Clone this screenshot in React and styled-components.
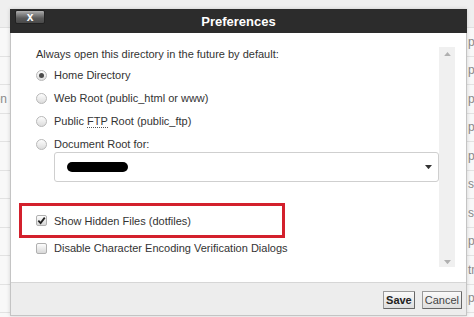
import React from "react"
import styled, { createGlobalStyle } from "styled-components"

const Global = createGlobalStyle`
html, body {
  margin: 0;
  padding: 0;
  width: 474px;
  height: 317px;
  overflow: hidden;
  font-family: "Liberation Sans", Arial, sans-serif;
}
`

const Page = styled.div`
position: relative;
width: 474px;
height: 317px;
background: #f8f8f8;
overflow: hidden;
`

const HeadRow = styled.div`
height: 28px;
background: #efefef;
border-bottom: 1px solid #e0e0e0;
box-sizing: border-box;
`

const Row = styled.div`
display: grid;
grid-template-columns: 10px 1fr 120px;
align-items: center;
height: 28.5px;
border-bottom: 1px solid #e2e2e2;
box-sizing: border-box;
font-size: 12px;
color: #8a8a8a;
`

const LeftCell = styled.div`
overflow: hidden;
white-space: nowrap;
direction: rtl;
text-align: right;
padding-right: 3px;
`

const RightCell = styled.div`
grid-column: 3;
padding-left: 114px;
white-space: nowrap;
overflow: hidden;
`

const Dialog = styled.div`
position: absolute;
left: 10px;
top: 9px;
width: 457px;
height: 307px;
box-sizing: border-box;
border: 1px solid #c4c4c4;
border-top: none;
background: #fff;
display: flex;
flex-direction: column;
box-shadow: 0 0 4px rgba(0,0,0,0.15);
`

const TitleBar = styled.div`
position: relative;
height: 24px;
flex: none;
margin: 0 -1px;
background: #2c2c2c;
display: flex;
align-items: center;
justify-content: center;
color: #fff;
font-weight: bold;
font-size: 13px;
`

const CloseButton = styled.div`
position: absolute;
left: 5px;
top: 1px;
width: 30px;
height: 14px;
border-radius: 2px;
background: linear-gradient(#b0b0b0 0%, #8a8a8a 25%, #5a5a5a 60%, #4a4a4a 100%);
border: 1px solid #222;
box-sizing: border-box;
display: flex;
align-items: center;
justify-content: center;
color: #fff;
font-size: 12px;
font-weight: bold;
line-height: 1;
`

const Body = styled.div`
flex: 1;
display: flex;
padding: 14px 11px 15px 0;
box-sizing: border-box;
border-bottom: 1px solid #d6d6d6;
`

const Content = styled.div`
flex: 1;
padding-left: 25px;
display: flex;
flex-direction: column;
font-size: 11px;
color: #333;
`

const Intro = styled.div`
line-height: 14px;
`

const Option = styled.label`
display: flex;
align-items: center;
gap: 7px;
height: 14px;
margin-top: ${p => p.$gap}px;
line-height: 14px;
white-space: nowrap;
`

const Radio = styled.span`
width: 11px;
height: 11px;
flex: none;
border-radius: 50%;
box-sizing: border-box;
border: 1px solid #b8b8b8;
background: linear-gradient(#fdfdfd, #dcdcdc);
display: flex;
align-items: center;
justify-content: center;
&::after {
  content: "";
  width: 5px;
  height: 5px;
  border-radius: 50%;
  background: ${p => (p.$on ? "#4a4a4a" : "transparent")};
}
`

const Check = styled.span`
width: 11px;
height: 11px;
flex: none;
border-radius: 2px;
box-sizing: border-box;
border: 1px solid #b0b0b0;
background: linear-gradient(#fdfdfd, #d8d8d8);
display: flex;
align-items: center;
justify-content: center;
`

const Abbr = styled.abbr`
text-decoration: none;
border-bottom: 1px dotted #555;
`

const Select = styled.div`
margin: 1px 0 0 18px;
height: 30px;
box-sizing: border-box;
border: 1px solid #cfcfcf;
border-radius: 3px;
display: flex;
align-items: center;
justify-content: space-between;
padding: 0 6px 0 12px;
`

const Redacted = styled.span`
width: 61px;
height: 10px;
border-radius: 5px;
background: #000;
`

const Highlight = styled.div`
margin: 21px 0 0 -17px;
width: 266px;
height: 35px;
box-sizing: border-box;
border: 3px solid #d3202c;
padding-left: 14px;
display: flex;
align-items: center;
`

const Scrollbar = styled.div`
width: 16px;
flex: none;
background: #f0f0f0;
display: flex;
flex-direction: column;
justify-content: space-between;
align-items: center;
padding: 5px 0 3px;
box-sizing: border-box;
`

const Footer = styled.div`
height: 32px;
flex: none;
background: #ededed;
display: flex;
justify-content: flex-end;
align-items: center;
gap: 7px;
padding: 0 4px 0 0;
`

const Button = styled.button`
height: 18px;
padding: 0 2px;
font-family: "Liberation Sans", Arial, sans-serif;
font-size: 11px;
font-weight: ${p => (p.$primary ? "bold" : "normal")};
color: ${p => (p.$primary ? "#222" : "#444")};
background: linear-gradient(#fafafa, #dedede);
border: 1px solid #999;
border-right-color: #666;
border-bottom-color: #666;
border-radius: 1px;
margin-top: 1px;
`

const Triangle = ({ down, color = "#aaa", w = 7 }) => (
  <svg width={w} height={w * 0.6} viewBox="0 0 10 6">
    <path d={down ? "M0 0 L10 0 L5 6 Z" : "M0 6 L10 6 L5 0 Z"} fill={color} />
  </svg>
)

const rows = [
  ["", "public_html"],
  ["", "public_ftp"],
  ["Open", "perl5"],
  ["", "php"],
  ["", "public"],
  ["", "ssl"],
  ["", "scripts"],
  ["", "perl"],
  ["", "tmp"],
  ["", "private"],
]

export default function App() {
  return (
    <>
      <Global />
      <Page>
        <HeadRow />
        {rows.map(([l, r], i) => (
          <Row key={i}>
            <LeftCell>{l}</LeftCell>
            <RightCell>{r}</RightCell>
          </Row>
        ))}
        <Dialog>
          <TitleBar>
            <CloseButton>x</CloseButton>
            Preferences
          </TitleBar>
          <Body>
            <Content>
              <Intro>Always open this directory in the future by default:</Intro>
              <Option $gap={7}><Radio $on /><span>Home Directory</span></Option>
              <Option $gap={9}><Radio /><span>Web Root (public_html or www)</span></Option>
              <Option $gap={9}><Radio /><span>Public <Abbr>FTP</Abbr> Root (public_ftp)</span></Option>
              <Option $gap={9}><Radio /><span>Document Root for:</span></Option>
              <Select>
                <Redacted />
                <Triangle down color="#333" w={7} />
              </Select>
              <Highlight>
                <Option $gap={0}>
                  <Check>
                    <svg width="9" height="9" viewBox="0 0 10 10">
                      <path d="M1.5 5.2 L4 7.8 L8.6 1.8" stroke="#222" strokeWidth="2" fill="none" />
                    </svg>
                  </Check>
                  <span>Show Hidden Files (dotfiles)</span>
                </Option>
              </Highlight>
              <Option $gap={3}><Check /><span>Disable Character Encoding Verification Dialogs</span></Option>
            </Content>
            <Scrollbar>
              <Triangle color="#b0b0b0" />
              <Triangle down color="#b0b0b0" />
            </Scrollbar>
          </Body>
          <Footer>
            <Button $primary>Save</Button>
            <Button>Cancel</Button>
          </Footer>
        </Dialog>
      </Page>
    </>
  )
}
